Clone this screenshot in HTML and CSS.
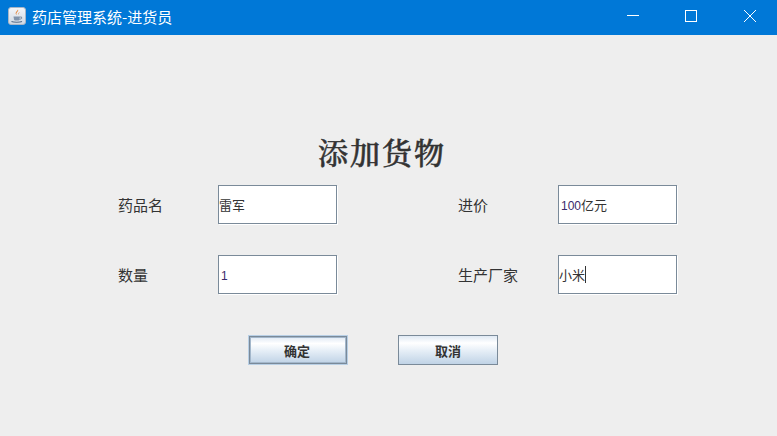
FILE: index.html
```html
<!DOCTYPE html>
<html lang="zh-CN">
<head>
<meta charset="utf-8">
<title>药店管理系统-进货员</title>
<link rel="stylesheet" href="styles.css">
</head>
<body>
<div class="window">
  <header class="titlebar">
    <svg class="app-icon" width="18" height="18" viewBox="0 0 18 18">
      <defs>
        <linearGradient id="iconBg" x1="0" y1="0" x2="0" y2="1">
          <stop offset="0" stop-color="#f4f6f9"/>
          <stop offset="1" stop-color="#cfd8e3"/>
        </linearGradient>
      </defs>
      <rect x="0.500" y="0.500" width="17" height="17" rx="2.500" fill="url(#iconBg)" stroke="#a9b6c6"/>
      <path d="M10 2.500c1.200 1.800-2.800 2.800-1.300 5.500-2-1.500-.6-3.300.4-4zM11.500 5c.3 1.300-1.700 1.800-1 3.200-.9-1.200.1-2.400 1-3.200z" fill="#e2761f"/>
      <path d="M5.500 9.500h6.500l-.5 3c-.2.700-.8 1-1.500 1H7.500c-.7 0-1.300-.3-1.500-1z" fill="#8194ab"/>
      <path d="M12 10h1.600v1.500L11.500 12.500" fill="none" stroke="#6c7f96" stroke-width=".8"/>
      <path d="M3.500 14.500c2 1 8.500 1 10.500 0" fill="none" stroke="#566c87" stroke-width="1.100"/>
    </svg>
    <span class="title-text">药店管理系统-进货员</span>
    <div class="controls">
      <svg class="control" width="58" height="35" viewBox="0 0 58 35"><path d="M24 15.500h12" stroke="#fff"/></svg>
      <svg class="control" width="58" height="35" viewBox="0 0 58 35"><rect x="24.500" y="10.500" width="11" height="11" fill="none" stroke="#fff"/></svg>
      <svg class="control" width="58" height="35" viewBox="0 0 58 35"><path d="M25 10l12 12M37 10l-12 12" stroke="#fff" fill="none"/></svg>
    </div>
  </header>
  <main class="content">
    <h1 class="heading">添加货物</h1>
    <form class="fields">
      <label class="label">药品名</label>
      <div class="input"><span>雷军</span></div>
      <label class="label">进价</label>
      <div class="input"><span><span class="num">100</span>亿元</span></div>
      <label class="label">数量</label>
      <div class="input"><span class="num">1</span></div>
      <label class="label">生产厂家</label>
      <div class="input"><span>小米</span><i class="caret"></i></div>
    </form>
    <div class="actions">
      <div class="button focused"><span>确定</span></div>
      <div class="button"><span>取消</span></div>
    </div>
  </main>
</div>
</body>
</html>
```
FILE: styles.css
```css
* { box-sizing: border-box; }
html, body { margin: 0; padding: 0; }
body {
  width: 777px;
  height: 436px;
  overflow: hidden;
  background: #eeeeee;
  font-family: "Noto Sans CJK SC", "Liberation Sans", sans-serif;
  color: #333333;
}
.window { display: flex; flex-direction: column; height: 436px; }
.titlebar {
  height: 35px;
  flex: none;
  display: flex;
  align-items: center;
  padding-left: 8px;
  background: #0078d7;
  color: #fff;
}
.app-icon { flex: none; margin-top: -3px; }
.title-text { margin-left: 6px; font-size: 15px; line-height: 20px; margin-top: -2px; }
.controls { display: flex; margin-left: auto; }
.control { display: block; }
.content { flex: 1; display: flex; flex-direction: column; }
.heading {
  margin: 97px 0 0;
  width: 764px;
  height: 38px;
  text-align: center;
  font-family: "Noto Serif CJK SC", "Noto Sans CJK SC", serif;
  font-size: 30px;
  line-height: 38px;
  font-weight: 500;
  letter-spacing: 2px;
  color: #333333;
  -webkit-text-stroke: 0.5px #333333;
}
.fields {
  margin: 15px 0 0 118px;
  display: grid;
  grid-template-columns: 100px 240px 100px 119px;
  grid-auto-rows: 39px;
  row-gap: 31px;
  align-items: center;
}
.label { font-size: 15px; line-height: 20px; color: #333333; }
.input {
  width: 119px;
  height: 39px;
  display: flex;
  align-items: center;
  background: #fff;
  border: 1px solid #7a8a99;
  box-shadow: 1px 1px 0 #ffffff;
  font-size: 13px;
  color: #333333;
}
.input span { line-height: 18px; }
.input .num { display: inline-block; font-family: "Liberation Sans", sans-serif; font-size: 12px; color: #3a2a6a; padding: 2px 0 0 2px; }
.caret { display: block; width: 1px; height: 17px; background: #333333; }
.actions {
  margin: 41px 0 0 249px;
  display: flex;
  gap: 51px;
  align-items: center;
}
.button {
  width: 100px;
  height: 30px;
  display: flex;
  align-items: center;
  justify-content: center;
  border: 1px solid #7a8a99;
  background: linear-gradient(#dfe9f4 0%, #ffffff 25%, #e4edf6 55%, #c0d3e6 100%);
  font-size: 13px;
  font-weight: 700;
  color: #333333;
}
.button.focused {
  width: 98px;
  height: 28px;
  padding-right: 2px;
  box-shadow: inset 0 0 0 1px #a3b7cb;
  outline: 1px solid #b8cfe5;
}
```
